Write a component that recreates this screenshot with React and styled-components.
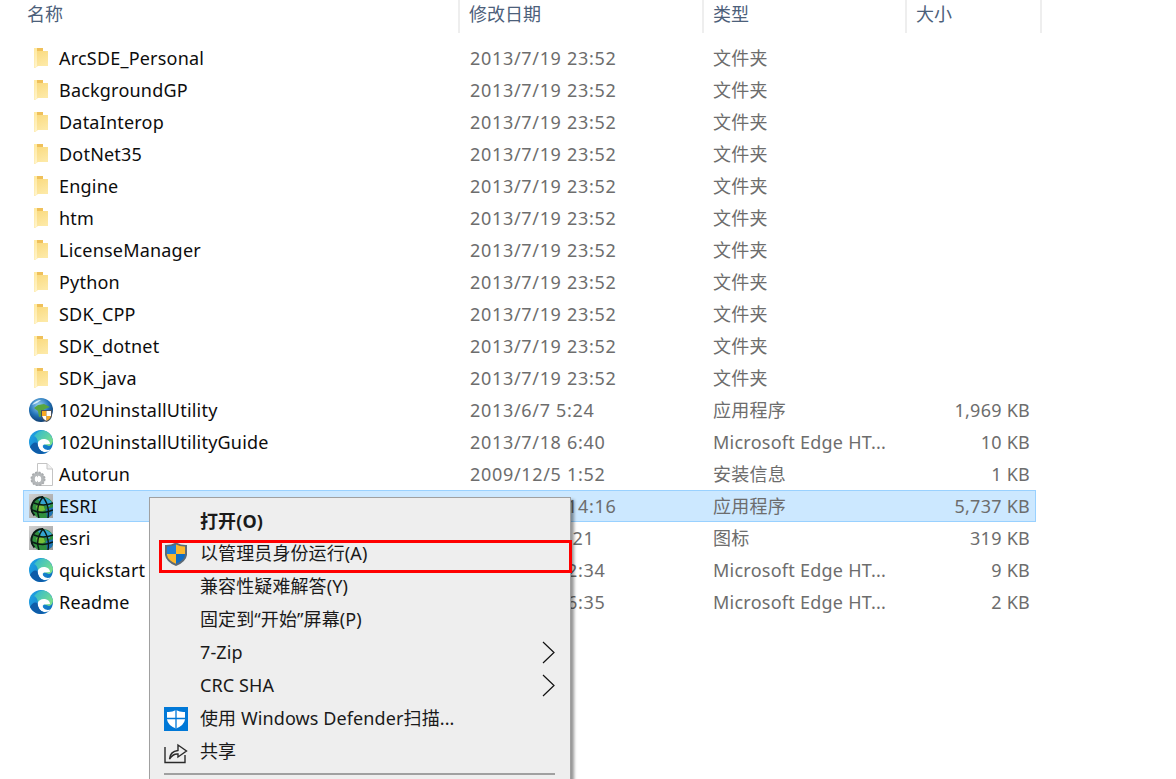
import React from 'react';
import styled, { createGlobalStyle } from 'styled-components';

const Global = createGlobalStyle`
  html, body { margin: 0; padding: 0; background: #fff; }
  body { width: 1176px; height: 779px; overflow: hidden; font-family: "Noto Sans", "Noto Sans CJK SC", sans-serif; }
`;

const Page = styled.div`
  position: relative;
  width: 1176px;
  height: 779px;
  overflow: hidden;
  background: #fff;
  font-size: 18px;
`;

const Header = styled.div`
  display: grid;
  grid-template-columns: 460px 244px 203px 135px;
  height: 33px;
`;

const HeaderCell = styled.div`
  box-sizing: border-box;
  height: 33px;
  padding: 0 0 6px 9px;
  border-right: 2px solid #eeeeee;
  color: #4c607a;
  font-size: 18px;
  line-height: 27px;
  font-family: "Noto Sans CJK SC", sans-serif;
  &:first-child { padding-left: 27px; }
`;

const List = styled.div`
  display: flex;
  flex-direction: column;
  margin: 9px 0 0 23px;
  width: 1013px;
`;

const Row = styled.div`
  box-sizing: border-box;
  height: 32px;
  display: grid;
  grid-template-columns: 446px 243px 222px 95px;
  align-items: center;
  border: 1px solid ${p => (p.$selected ? '#99d1ff' : 'transparent')};
  background: ${p => (p.$selected ? '#cce8ff' : 'transparent')};
`;

const NameCell = styled.div`
  display: flex;
  align-items: center;
  color: #0d0d0d;
  white-space: nowrap;
  line-height: 30px;
  letter-spacing: 0.2px;
`;

const IconSlot = styled.span`
  width: 24px;
  height: 24px;
  margin: 0 6px 0 5px;
  flex: none;
  display: flex;
  align-items: center;
  justify-content: center;
`;

const DateCell = styled.div`
  color: #6d6d6d;
  white-space: nowrap;
  line-height: 30px;
  letter-spacing: 0.68px;
`;

const TypeCell = styled.div`
  color: #6d6d6d;
  white-space: nowrap;
  line-height: 30px;
  letter-spacing: 0.25px;
`;

const SizeCell = styled.div`
  color: #6d6d6d;
  white-space: nowrap;
  line-height: 30px;
  text-align: right;
  letter-spacing: 0.25px;
`;

const Menu = styled.div`
  position: absolute;
  left: 149px;
  top: 497px;
  width: 422px;
  height: 300px;
  box-sizing: border-box;
  padding-top: 6px;
  background: #eeeeee;
  border: 1px solid #a0a0a0;
  box-shadow: 3px 3px 3px rgba(0, 0, 0, 0.42);
  color: #1a1a1a;
  display: flex;
  flex-direction: column;
`;

const MenuItem = styled.div`
  box-sizing: border-box;
  height: 33px;
  flex: none;
  display: flex;
  align-items: center;
  padding: ${p => (p.$bold ? '2px' : '0')} 0 0 14px;
  line-height: 31px;
  font-weight: ${p => (p.$bold ? 700 : 400)};
  white-space: nowrap;
  letter-spacing: 0.1px;
`;

const MenuIcon = styled.span`
  width: 24px;
  height: 24px;
  margin-right: 12px;
  flex: none;
  display: flex;
  align-items: center;
`;

const MenuLabel = styled.span`
  flex: 1;
`;

const Chevron = styled.svg`
  width: 13px;
  height: 23px;
  margin-right: 15px;
  flex: none;
`;

const Separator = styled.div`
  height: 2px;
  flex: none;
  margin: 5px 15px 0 14px;
  background: #a0a0a0;
`;

const Highlight = styled.div`
  position: absolute;
  left: 159px;
  top: 540px;
  width: 413px;
  height: 33px;
  box-sizing: border-box;
  border: 3px solid #ff0000;
  pointer-events: none;
`;

const Folder = () => (
  <svg width="14" height="22" viewBox="0 0 14 22">
    <defs>
      <linearGradient id="fg" x1="0" x2="0.3" y1="0" y2="1">
        <stop offset="0" stopColor="#f9d777" />
        <stop offset="1" stopColor="#fde9a6" />
      </linearGradient>
      <linearGradient id="fl" x1="0" x2="0" y1="0" y2="1">
        <stop offset="0" stopColor="#ffe9a0" />
        <stop offset="1" stopColor="#fff4cc" />
      </linearGradient>
    </defs>
    <path d="M0 1 L7 1 L7 4 L14 4 L14 19 L4 19 L1 21 L0 21 Z" fill="url(#fg)" />
    <path d="M0 1 L3 1 L3 19.5 L0.5 21 Z" fill="url(#fl)" />
    <path d="M3 1 L9 1 L9 4 L3 4 Z" fill="#efc05a" />
  </svg>
);

const GlobeShield = () => (
  <svg width="24" height="24" viewBox="0 0 24 24">
    <defs>
      <radialGradient id="gs" cx="0.42" cy="0.32" r="0.75">
        <stop offset="0" stopColor="#9bd3f2" />
        <stop offset="0.55" stopColor="#2273b8" />
        <stop offset="1" stopColor="#0a315f" />
      </radialGradient>
    </defs>
    <circle cx="12" cy="12" r="12" fill="url(#gs)" />
    <path d="M9 7 L15 6 L21 9 L16 11 L13 13 L13 18 L10 19 L9 13 L5 10 Z" fill="#58a63f" />
    <path d="M3 7 Q7 2 12 2 L8 5 Z" fill="#d8eefa" />
    <g>
      <path d="M12 12 L23 12 L23 18 Q22 22.5 17.5 24 Q13 22.5 12 18 Z" fill="#46505f" />
      <path d="M13 13 L17.5 13 L17.5 18 L13 18 Z" fill="#f7a823" />
      <path d="M17.5 13 L22 13 L22 18 L17.5 18 Z" fill="#fdfdfd" />
      <path d="M13 18 L17.5 18 L17.5 23 Q14 21.5 13 18 Z" fill="#fdfdfd" />
      <path d="M17.5 18 L22 18 Q21 21.5 17.5 23 Z" fill="#f7a823" />
    </g>
  </svg>
);

const Edge = () => (
  <svg width="24" height="24" viewBox="0 0 24 24">
    <defs>
      <linearGradient id="e1" x1="0" x2="1" y1="0.2" y2="0.8">
        <stop offset="0" stopColor="#1fa2e4" />
        <stop offset="1" stopColor="#0f71c0" />
      </linearGradient>
      <linearGradient id="e2" x1="0" x2="1" y1="0" y2="0.7">
        <stop offset="0" stopColor="#2bb4d8" />
        <stop offset="1" stopColor="#7be08a" />
      </linearGradient>
    </defs>
    <circle cx="12" cy="12" r="12" fill="url(#e1)" />
    <path d="M5 6 Q9 0.5 14 0.2 Q21 1 24 10 Q24 15 20 16 L9 12 Q8 7 5 6 Z" fill="url(#e2)" />
    <path d="M21 14 Q21 10 16 9 Q10 8.5 8.5 13.5 Q8 20 15 22 Q19 22.5 22 19.5 Q16 21 14 17.5 Q13 15.5 15 14.5 Z" fill="#fff" />
    <path d="M8.5 13 Q9 20 15 22.6 Q18 23 20.5 21.2 Q16 24.4 11 23.9 Q4 23 1 17 Q4 11 8.5 13 Z" fill="#0f5ca8" />
  </svg>
);

const Setup = () => (
  <svg width="24" height="24" viewBox="0 0 24 24">
    <path d="M8.5 1.5 L18 1.5 L23.5 7 L23.5 23.5 L8.5 23.5 Z" fill="#fff" stroke="#c4c4c4" />
    <path d="M18 1.5 L18 7 L23.5 7" fill="#f0f0f0" stroke="#c4c4c4" />
    <circle cx="9" cy="17" r="5" fill="none" stroke="#b5b8ba" strokeWidth="3.6" />
    <circle cx="9" cy="17" r="6.6" fill="none" stroke="#a8abad" strokeWidth="1.8" strokeDasharray="2 1.5" />
    <circle cx="9" cy="17" r="2" fill="#fff" />
  </svg>
);

const EsriGlobe = () => (
  <svg width="24" height="24" viewBox="0 0 24 24">
    <defs>
      <linearGradient id="eb" x1="0" x2="1" y1="0" y2="1">
        <stop offset="0" stopColor="#d0d0d0" />
        <stop offset="1" stopColor="#9a9a9a" />
      </linearGradient>
    </defs>
    <rect width="24" height="24" fill="url(#eb)" />
    <circle cx="14" cy="14" r="11" fill="#2f8f3f" />
    <path d="M9 5 Q15 1 23 8 L20 13 L12 10 Z" fill="#35a3d0" />
    <path d="M17 15 L25 13 L23 21 L18 24 Z" fill="#1f74b8" />
    <path d="M7 12 L14 10 L16 16 L9 19 Z" fill="#78c038" />
    <g fill="none" stroke="#0a1a14" strokeWidth="1.4">
      <path d="M5.5 21.5 A11 11 0 0 1 14 3" strokeWidth="2" />
      <path d="M14 3 Q6 13 10 24" />
      <path d="M14 3 Q21 12 19 24" />
      <path d="M5 9 Q14 13 24 9" />
      <path d="M3 16 Q14 21 24 16" />
    </g>
  </svg>
);

const UacShield = () => (
  <svg width="24" height="24" viewBox="0 0 24 24">
    <path d="M12 0.5 Q18 3.5 23 3 L23 13 Q22 20 12 24 Q2 20 1 13 L1 3 Q6 3.5 12 0.5 Z" fill="#5d6a75" />
    <path d="M12 2.5 L12 12 L3 12 L3 4.6 Q8 4.8 12 2.5 Z" fill="#1f7fd6" />
    <path d="M12 2.5 Q16 4.8 21 4.6 L21 12 L12 12 Z" fill="#fcb72c" />
    <path d="M3 12 L12 12 L12 21.8 Q4 18.5 3 13 Z" fill="#fcb72c" />
    <path d="M12 12 L21 12 L21 13 Q20 18.5 12 21.8 Z" fill="#0f6cc4" />
  </svg>
);

const DefenderIcon = () => (
  <svg width="24" height="24" viewBox="0 0 24 24">
    <rect width="24" height="24" fill="#0078d7" />
    <path d="M12 3 Q16.5 5.6 21 5 L21 12.5 Q20 18.5 12 21.5 Q4 18.5 3 12.5 L3 5 Q7.5 5.6 12 3 Z" fill="#fff" />
    <path d="M12 3 L12 21.5 M3 11.5 L21 11.5" stroke="#0078d7" strokeWidth="1.3" />
  </svg>
);

const ShareIcon = () => (
  <svg width="24" height="24" viewBox="0 0 24 24" fill="none" stroke="#2a2a2a" strokeWidth="1.4">
    <path d="M1 7 L1 22.5 L21 22.5 L21 15" />
    <path d="M5.5 19 Q6 11.5 14 10.5 L14 5 L22.5 11 L14 17 L14 14 Q9 13.5 5.5 19 Z" />
  </svg>
);

const folders = ['ArcSDE_Personal', 'BackgroundGP', 'DataInterop', 'DotNet35', 'Engine', 'htm', 'LicenseManager', 'Python', 'SDK_CPP', 'SDK_dotnet', 'SDK_java'];

const rows = [
  ...folders.map(name => ({ name, icon: <Folder />, date: '2013/7/19 23:52', type: '文件夹', size: '' })),
  { name: '102UninstallUtility', icon: <GlobeShield />, date: '2013/6/7 5:24', type: '应用程序', size: '1,969 KB' },
  { name: '102UninstallUtilityGuide', icon: <Edge />, date: '2013/7/18 6:40', type: 'Microsoft Edge HT...', size: '10 KB' },
  { name: 'Autorun', icon: <Setup />, date: '2009/12/5 1:52', type: '安装信息', size: '1 KB' },
  { name: 'ESRI', icon: <EsriGlobe />, date: '2013/7/19 14:16', type: '应用程序', size: '5,737 KB', selected: true },
  { name: 'esri', icon: <EsriGlobe />, date: '2013/6/7 5:21', type: '图标', size: '319 KB' },
  { name: 'quickstart', icon: <Edge />, date: '2013/7/18 2:34', type: 'Microsoft Edge HT...', size: '9 KB' },
  { name: 'Readme', icon: <Edge />, date: '2013/7/18 6:35', type: 'Microsoft Edge HT...', size: '2 KB' },
];

const Arrow = () => (
  <Chevron viewBox="0 0 13 23">
    <path d="M1 1 L12 11.5 L1 22" fill="none" stroke="#111" strokeWidth="1.2" />
  </Chevron>
);

const menu = [
  { label: '打开(O)', bold: true },
  { label: '以管理员身份运行(A)', icon: <UacShield /> },
  { label: '兼容性疑难解答(Y)' },
  { label: '固定到“开始”屏幕(P)' },
  { label: '7-Zip', sub: true },
  { label: 'CRC SHA', sub: true },
  { label: '使用 Windows Defender扫描...', icon: <DefenderIcon /> },
  { label: '共享', icon: <ShareIcon /> },
];

export default function App() {
  return (
    <Page>
      <Global />
      <Header>
        <HeaderCell>名称</HeaderCell>
        <HeaderCell>修改日期</HeaderCell>
        <HeaderCell>类型</HeaderCell>
        <HeaderCell>大小</HeaderCell>
      </Header>
      <List>
        {rows.map(r => (
          <Row key={r.name} $selected={r.selected}>
            <NameCell>
              <IconSlot>{r.icon}</IconSlot>
              {r.name}
            </NameCell>
            <DateCell>{r.date}</DateCell>
            <TypeCell>{r.type}</TypeCell>
            <SizeCell>{r.size}</SizeCell>
          </Row>
        ))}
      </List>
      <Menu>
        {menu.map(m => (
          <MenuItem key={m.label} $bold={m.bold}>
            <MenuIcon>{m.icon}</MenuIcon>
            <MenuLabel>{m.label}</MenuLabel>
            {m.sub && <Arrow />}
          </MenuItem>
        ))}
        <Separator />
      </Menu>
      <Highlight />
    </Page>
  );
}
